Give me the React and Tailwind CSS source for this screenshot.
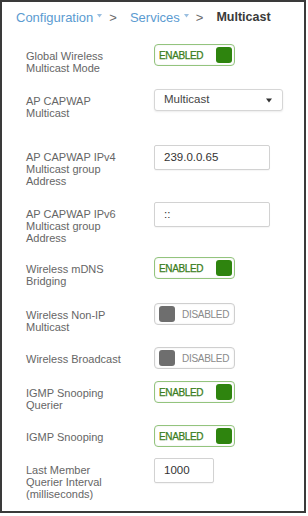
import React from 'react';

const font = { fontFamily: '"Liberation Sans", Arial, sans-serif' };

function Caret() {
  return (
    <svg width="5" height="4" viewBox="0 0 5 4" className="ml-[4px] mt-[-4px] inline-block">
      <path d="M0 0 L5 0 L2.5 3.5 Z" fill="#9bbfe0" />
    </svg>
  );
}

function Toggle({ on }) {
  if (on) {
    return (
      <div className="flex h-[22px] w-[81px] items-center justify-between rounded-[4px] border border-[#93c47d] bg-white pl-[4px] pr-[2px] shadow-[inset_0_0_2px_rgba(0,0,0,0.1)]">
        <span className="text-[10px] tracking-[-0.35px] text-[#3a7d20] [-webkit-text-stroke:0.25px_#3a7d20]">ENABLED</span>
        <span className="h-[16px] w-[16px] rounded-[3px] bg-[#2e840e]" />
      </div>
    );
  }
  return (
    <div className="flex h-[22px] w-[81px] items-center rounded-[4px] border border-[#cfcfcf] bg-white pl-[4px] shadow-[inset_0_0_2px_rgba(0,0,0,0.1)]">
      <span className="h-[16px] w-[16px] rounded-[3px] bg-[#6e6e6e]" />
      <span className="ml-[7px] text-[10px] tracking-[-0.3px] text-[#8a8a8a]">DISABLED</span>
    </div>
  );
}

function TextInput({ value, width }) {
  return (
    <div
      className={`flex h-[25px] items-center rounded-[2px] border border-[#d2d2d2] bg-white pl-[9px] text-[11.5px] text-[#333] shadow-[0_1px_1px_rgba(0,0,0,0.04)] ${width}`}
    >
      {value}
    </div>
  );
}

function Select() {
  return (
    <div className="flex h-[22px] w-[129px] items-center justify-between rounded-[3px] border border-[#d6d6d6] bg-white pl-[9px] pr-[10px] text-[11.5px] text-[#444] shadow-[0_1px_2px_rgba(0,0,0,0.08)]">
      <span>Multicast</span>
      <svg width="6" height="5" viewBox="0 0 6 5">
        <path d="M0 0.5 L6 0.5 L3 4.5 Z" fill="#333" />
      </svg>
    </div>
  );
}

const rows = [
  { label: ['Global Wireless', 'Multicast Mode'], h: 'h-[45px]', control: <Toggle on /> },
  { label: ['AP CAPWAP', 'Multicast'], h: 'h-[56px]', control: <Select /> },
  { label: ['AP CAPWAP IPv4', 'Multicast group', 'Address'], h: 'h-[57px]', control: <TextInput value="239.0.0.65" width="w-[116px]" /> },
  { label: ['AP CAPWAP IPv6', 'Multicast group', 'Address'], h: 'h-[55px]', control: <TextInput value="::" width="w-[116px]" /> },
  { label: ['Wireless mDNS', 'Bridging'], h: 'h-[46px]', control: <Toggle on /> },
  { label: ['Wireless Non-IP', 'Multicast'], h: 'h-[44px]', control: <Toggle /> },
  { label: ['Wireless Broadcast'], h: 'h-[34px]', control: <Toggle /> },
  { label: ['IGMP Snooping', 'Querier'], h: 'h-[44px]', control: <Toggle on /> },
  { label: ['IGMP Snooping'], h: 'h-[33px]', control: <Toggle on /> },
  { label: ['Last Member', 'Querier Interval', '(milliseconds)'], h: 'h-[45px]', control: <TextInput value="1000" width="w-[60px]" /> },
];

export default function App() {
  return (
    <div className="h-[516px] w-[308px] bg-white" style={font}>
      <div className="h-[513px] w-[306px] border-2 border-[#3a3a3a] bg-white">
        <div className="ml-[14px] mt-[8px] flex h-[15px] items-center text-[13px] leading-[15px]">
          <span className="text-[#5b9bd1]">Configuration</span>
          <Caret />
          <span className="ml-[7px] text-[#6a6a6a]">&gt;</span>
          <span className="ml-[13px] text-[#5b9bd1]">Services</span>
          <Caret />
          <span className="ml-[7px] text-[#6a6a6a]">&gt;</span>
          <span className="ml-[13px] text-[12.5px] font-bold text-[#3a3a3a]">Multicast</span>
        </div>
        <div className="ml-[24px] mt-[19px] flex flex-col">
          {rows.map((row, i) => (
            <div key={i} className={`flex items-start ${row.h}`}>
              <div className="w-[128px] pt-[6px] text-[11px] leading-[12px] text-[#666]">
                {row.label.map((line) => (
                  <div key={line}>{line}</div>
                ))}
              </div>
              {row.control}
            </div>
          ))}
        </div>
      </div>
    </div>
  );
}
